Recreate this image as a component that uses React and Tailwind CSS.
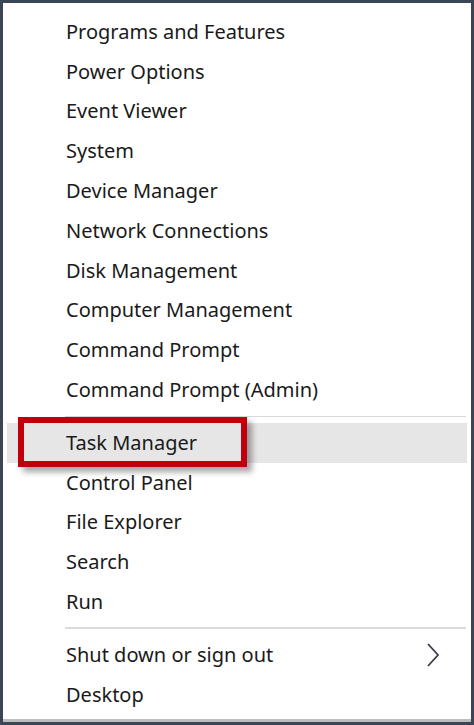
const groupA = [
  "Programs and Features",
  "Power Options",
  "Event Viewer",
  "System",
  "Device Manager",
  "Network Connections",
  "Disk Management",
  "Computer Management",
  "Command Prompt",
  "Command Prompt (Admin)",
];

const groupB = ["Task Manager", "Control Panel", "File Explorer", "Search", "Run"];

function Item({ label, active, arrow }) {
  return (
    <div
      className={`relative mx-[4px] h-[39.8px] flex items-center pl-[59px] pr-4 ${
        active ? "bg-[#e6e6e6]" : ""
      }`}
    >
      <span className="text-[#1a1a1a] text-[20px] leading-none">{label}</span>
      {arrow && (
        <svg className="ml-auto mr-[10px] w-[16px] h-[26px]" viewBox="0 0 16 26" fill="none">
          <path d="M3 2l10 11-10 11" stroke="#3a3a4a" strokeWidth="1.8" />
        </svg>
      )}
      {active && (
        <div className="absolute left-[11px] top-[-6px] w-[229px] h-[50px] border-[6px] border-[#c0000c] shadow-[5px_5px_6px_rgba(0,0,0,0.35)]" />
      )}
    </div>
  );
}

export default function App() {
  return (
    <div
      className="w-[474px] h-[725px] bg-[#3a4556] pl-[3px] pt-[3px] pr-[3px] pb-[3px]"
      style={{ fontFamily: '"Noto Sans", "Open Sans", sans-serif' }}
    >
      <div className="h-full bg-white flex flex-col pt-[9px] border-b-[3px] border-[#bdbdbd]">
        {groupA.map((l) => (
          <Item key={l} label={l} />
        ))}
        <div className="ml-[62px] mr-[5px] mt-[6px] mb-[6px] h-px bg-[#d8d8d8]" />
        {groupB.map((l) => (
          <Item key={l} label={l} active={l === "Task Manager"} />
        ))}
        <div className="ml-[62px] mr-[5px] mt-[5px] mb-[6px] h-[2px] bg-[#dadada]" />
        <Item label="Shut down or sign out" arrow />
        <Item label="Desktop" />
      </div>
    </div>
  );
}
